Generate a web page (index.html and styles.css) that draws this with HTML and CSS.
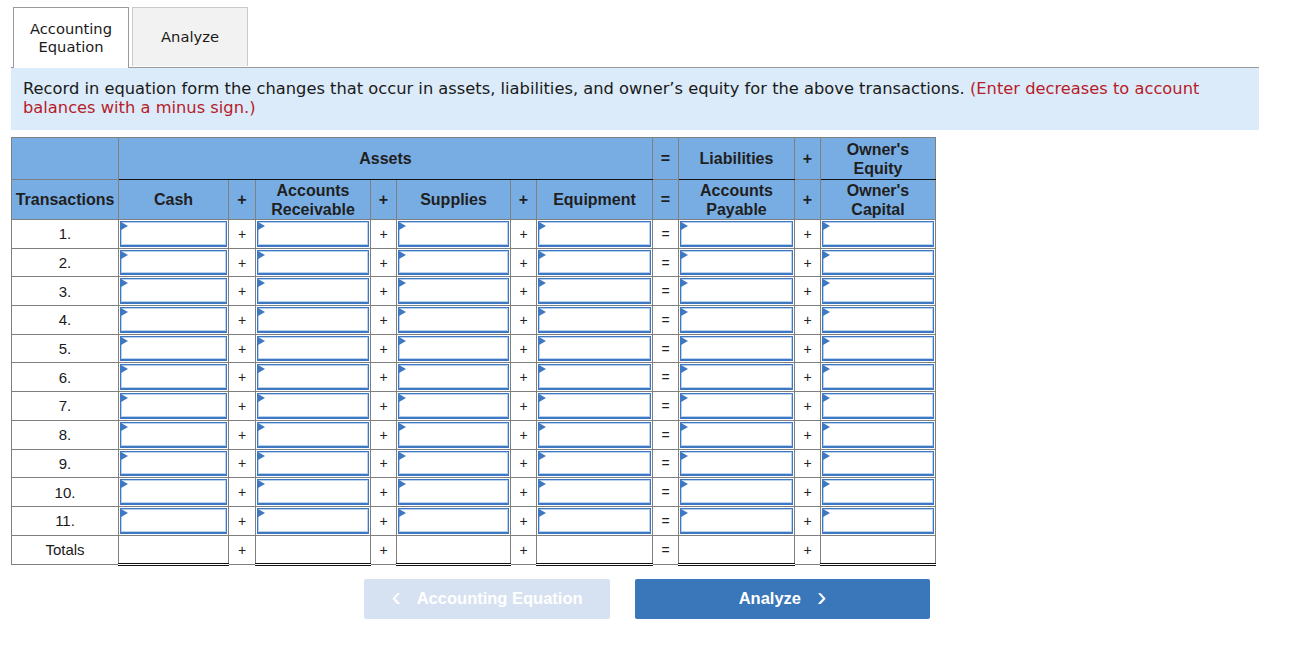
FILE: index.html
```html
<!DOCTYPE html>
<html lang="en">
<head>
  <meta charset="UTF-8">
  <title>Accounting Equation</title>
  <link rel="stylesheet" href="styles.css">
</head>
<body>
  <div class="page">
    <div class="tabs">
      <div class="tab active">Accounting<br>Equation</div>
      <div class="tab">Analyze</div>
    </div>

    <div class="instructions">
      Record in equation form the changes that occur in assets, liabilities, and owner’s equity for the above transactions.
      <span class="hint">(Enter decreases to account balances with a minus sign.)</span>
    </div>

    <table class="equation">
      <colgroup>
        <col class="c-trans">
        <col class="c-cash">
        <col class="c-op1">
        <col class="c-ar">
        <col class="c-op">
        <col class="c-sup">
        <col class="c-op">
        <col class="c-equip">
        <col class="c-op">
        <col class="c-equip">
        <col class="c-op">
        <col class="c-ar">
      </colgroup>
      <thead>
        <tr class="head-top">
          <th></th>
          <th colspan="7" class="group">Assets</th>
          <th class="op">=</th>
          <th class="group">Liabilities</th>
          <th class="op">+</th>
          <th class="group">Owner's<br>Equity</th>
        </tr>
        <tr class="head-sub">
          <th>Transactions</th>
          <th>Cash</th>
          <th class="op">+</th>
          <th>Accounts<br>Receivable</th>
          <th class="op">+</th>
          <th>Supplies</th>
          <th class="op">+</th>
          <th>Equipment</th>
          <th class="op">=</th>
          <th>Accounts<br>Payable</th>
          <th class="op">+</th>
          <th>Owner's<br>Capital</th>
        </tr>
      </thead>
      <tbody id="rows"></tbody>
    </table>

    <div class="nav">
      <button class="nav-btn prev" disabled><span class="chev">&lsaquo;</span> Accounting Equation</button>
      <button class="nav-btn next">Analyze <span class="chev">&rsaquo;</span></button>
    </div>
  </div>

  <script>
    const ops = ['+', '+', '+', '=', '+'];
    const body = document.getElementById('rows');

    function field() {
      return '<td class="cell"><div class="field"><input type="text"></div></td>';
    }

    function row(label, isTotal) {
      let html = '<td class="label">' + label + '</td>';
      for (let i = 0; i < 6; i++) {
        html += isTotal ? '<td class="total"></td>' : field();
        if (i < 5) {
          html += '<td class="sign">' + ops[i] + '</td>';
        }
      }
      return '<tr class="' + (isTotal ? 'totals' : 'entry') + '">' + html + '</tr>';
    }

    let out = '';
    for (let n = 1; n <= 11; n++) {
      out += row(n + '.', false);
    }
    out += row('Totals', true);
    body.innerHTML = out;
  </script>
</body>
</html>
```

FILE: styles.css
```css
body {
  margin: 0;
  background: #fff;
  font-family: 'DejaVu Sans', Verdana, sans-serif;
  color: #1a1a1a;
}

.page {
  padding: 7px 0 0 11px;
  width: 1248px;
}

.tabs {
  display: flex;
  gap: 3px;
  padding-left: 2px;
}

.tab {
  width: 114px;
  height: 58px;
  display: flex;
  align-items: center;
  justify-content: center;
  text-align: center;
  font-size: 14.7px;
  line-height: 18px;
  border: 1px solid #c9c9c9;
  border-bottom: none;
  background: #f2f2f2;
  color: #1a1a1a;
}

.tab.active {
  background: #fff;
  border-color: #9a9a9a;
  height: 60px;
  margin-bottom: -1px;
  position: relative;
}

.instructions {
  background: #dbebf9;
  border-top: 1px solid #9a9a9a;
  padding: 11px 12px 13px;
  font-size: 16.3px;
  line-height: 19px;
  color: #1a1a1a;
}

.hint {
  color: #b71c2a;
}

.equation {
  margin-top: 7px;
  border-collapse: collapse;
  table-layout: fixed;
  width: 925px;
  font-family: 'Liberation Sans', Arial, sans-serif;
  border: 1px solid #7f7f7f;
}

.c-trans { width: 107px; }
.c-cash { width: 110px; }
.c-op1 { width: 27px; }
.c-ar { width: 115px; }
.c-sup { width: 114px; }
.c-equip { width: 116px; }
.c-op { width: 26px; }

.equation th {
  background: #78ade3;
  border: 1px solid #7f7f7f;
  font-size: 16px;
  font-weight: bold;
  line-height: 19px;
  color: #1f1f1f;
  padding: 0;
  text-align: center;
}

.head-top th {
  height: 41px;
}

.head-top th.group {
  border-bottom: 1px solid #111;
}

.head-sub th {
  height: 39px;
}

.equation td {
  border: 1px solid #7f7f7f;
  padding: 0;
  height: 27px;
  text-align: center;
}

td.label {
  font-size: 15px;
  color: #1a1a1a;
}

td.sign {
  font-size: 14px;
  color: #222;
}

td.cell {
  padding: 1px;
  height: auto;
}

.field {
  position: relative;
  height: 25.7px;
}

.field::before {
  content: '';
  position: absolute;
  left: 1px;
  top: 1px;
  border-left: 7px solid #3f78c2;
  border-top: 4px solid transparent;
  border-bottom: 4px solid transparent;
}

.field input {
  display: block;
  width: 100%;
  height: 100%;
  box-sizing: border-box;
  border: 1px solid #3f78c2;
  border-bottom-width: 2px;
  box-shadow: inset 0 0 0 1px #b7d1ef;
  background: #fff;
  margin: 0;
  padding: 0 4px;
  outline: none;
}

.totals td {
  height: 27px;
}

.totals td.total {
  border-top: 1px solid #111;
  border-bottom: 3px double #111;
}

.nav {
  display: flex;
  gap: 25px;
  margin-top: 13px;
  padding-left: 353px;
}

.nav-btn {
  height: 40px;
  border: none;
  border-radius: 2px;
  font-family: 'Liberation Sans', Arial, sans-serif;
  font-size: 16.5px;
  font-weight: bold;
  color: #fff;
  display: flex;
  align-items: center;
  justify-content: center;
  gap: 16px;
}

.nav-btn .chev {
  font-size: 28px;
  font-weight: normal;
  line-height: 20px;
  margin-top: -3px;
}

.prev {
  width: 246px;
  background: #d6e2f1;
}

.next {
  width: 295px;
  background: #3a76ba;
  cursor: pointer;
}
```
